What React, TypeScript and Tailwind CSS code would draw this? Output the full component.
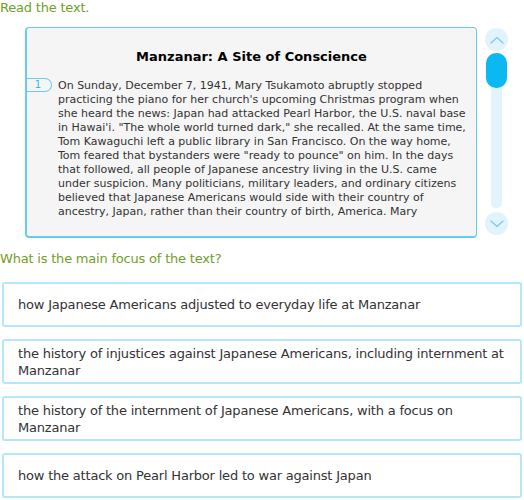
import React from "react";

const lines = [
  "On Sunday, December 7, 1941, Mary Tsukamoto abruptly stopped",
  "practicing the piano for her church's upcoming Christmas program when",
  "she heard the news: Japan had attacked Pearl Harbor, the U.S. naval base",
  "in Hawai'i. \"The whole world turned dark,\" she recalled. At the same time,",
  "Tom Kawaguchi left a public library in San Francisco. On the way home,",
  "Tom feared that bystanders were \"ready to pounce\" on him. In the days",
  "that followed, all people of Japanese ancestry living in the U.S. came",
  "under suspicion. Many politicians, military leaders, and ordinary citizens",
  "believed that Japanese Americans would side with their country of",
  "ancestry, Japan, rather than their country of birth, America. Mary",
];

const answers = [
  ["how Japanese Americans adjusted to everyday life at Manzanar"],
  ["the history of injustices against Japanese Americans, including internment at", "Manzanar"],
  ["the history of the internment of Japanese Americans, with a focus on", "Manzanar"],
  ["how the attack on Pearl Harbor led to war against Japan"],
];

function Chevron({ up }: { up?: boolean }) {
  return (
    <svg width="14" height="8" viewBox="0 0 14 8" fill="none">
      <path
        d={up ? "M1 7 L7 1.5 L13 7" : "M1 1 L7 6.5 L13 1"}
        stroke="#7ccdee"
        strokeWidth="1.3"
        strokeLinecap="round"
        strokeLinejoin="round"
      />
    </svg>
  );
}

export default function App() {
  return (
    <div
      className="w-[524px] h-[500px] bg-white overflow-hidden"
      style={{ fontFamily: '"DejaVu Sans", Verdana, sans-serif' }}
    >
      <div className="text-[13px] tracking-[-0.2px] leading-[16px] text-[#71a02a]">Read the text.</div>

      <div className="flex mt-[11px] ml-[25px] gap-[8px]">
        <div className="relative w-[452px] h-[211px] bg-[#f5f5f5] border border-[#66ccf2] border-l-2 border-b-2 rounded-[4px] overflow-hidden">
          <div className="text-center font-bold text-[13px] leading-[16px] text-black mt-[21px]">
            Manzanar: A Site of Conscience
          </div>
          <div className="relative mt-[14px] pl-[31px] text-[11px] leading-[14px] text-[#333333]">
            <div className="absolute left-[-2px] top-[-1px] w-[27px] h-[14px] border border-[#66ccf2] border-l-0 rounded-r-full bg-[#f5f5f5] flex items-center justify-center text-[10px] leading-none text-[#33b8ea]">
              1
            </div>
            {lines.map((l, i) => (
              <div key={i} className="whitespace-nowrap">
                {l}
              </div>
            ))}
          </div>
        </div>

        <div className="w-[23px] flex flex-col items-center">
          <div className="w-[23px] h-[23px] rounded-full bg-[#e3f3fb] flex items-center justify-center mt-[1px]">
            <Chevron up />
          </div>
          <div className="relative w-[11px] h-[155px] mt-[2px] bg-[#e3f3fb] rounded-full">
            <div className="absolute left-[-5px] top-0 w-[21px] h-[35px] rounded-[10px] bg-[#0bb8f2]" />
          </div>
          <div className="w-[23px] h-[23px] rounded-full bg-[#e3f3fb] flex items-center justify-center mt-[4px]">
            <Chevron />
          </div>
        </div>
      </div>

      <div className="text-[13px] tracking-[-0.2px] leading-[16px] text-[#71a02a] mt-[13px]">
        What is the main focus of the text?
      </div>

      <div className="flex flex-col gap-[12px] mx-[2px] mt-[15px]">
        {answers.map((a, i) => (
          <div
            key={i}
            className="min-h-[45px] flex items-center border-2 border-[#b5e6fa] rounded-[3px] px-[14px] py-[3px] text-[13px] tracking-[-0.2px] leading-[17px] text-[#333333]"
          >
            <div>
              {a.map((t, j) => (
                <div key={j} className="whitespace-nowrap">{t}</div>
              ))}
            </div>
          </div>
        ))}
      </div>
    </div>
  );
}
